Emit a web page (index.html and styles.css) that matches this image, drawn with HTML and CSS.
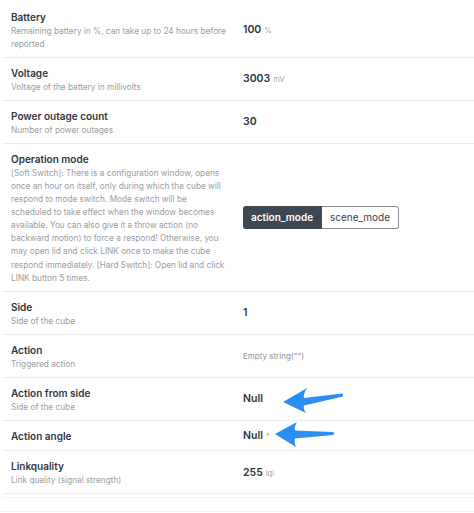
FILE: index.html
```html
<!DOCTYPE html>
<html>
<head>
<meta charset="utf-8">
<link rel="stylesheet" href="styles.css">
</head>
<body>
<div class="page">
  <div class="table">
    <div class="row">
      <div class="label"><div class="title">Battery</div><div class="desc">Remaining battery in %, can take up to 24 hours before reported</div></div>
      <div class="value"><span class="num">100</span> <span class="unit">%</span></div>
    </div>
    <div class="row">
      <div class="label"><div class="title">Voltage</div><div class="desc">Voltage of the battery in millivolts</div></div>
      <div class="value"><span class="num">3003</span> <span class="unit">mV</span></div>
    </div>
    <div class="row">
      <div class="label"><div class="title">Power outage count</div><div class="desc">Number of power outages</div></div>
      <div class="value"><span class="num">30</span></div>
    </div>
    <div class="row">
      <div class="label"><div class="title">Operation mode</div><div class="desc">[Soft Switch]: There is a configuration window, opens once an hour on itself, only during which the cube will respond to mode switch. Mode switch will be scheduled to take effect when the window becomes available. You can also give it a throw action (no backward motion) to force a respond! Otherwise, you may open lid and click LINK once to make the cube respond immediately. [Hard Switch]: Open lid and click LINK button 5 times.</div></div>
      <div class="value"><div class="btn-group"><button class="btn active">action_mode</button><button class="btn">scene_mode</button></div></div>
    </div>
    <div class="row">
      <div class="label"><div class="title">Side</div><div class="desc">Side of the cube</div></div>
      <div class="value"><span class="num">1</span></div>
    </div>
    <div class="row">
      <div class="label"><div class="title">Action</div><div class="desc">Triggered action</div></div>
      <div class="value"><span class="muted">Empty string("")</span></div>
    </div>
    <div class="row">
      <div class="label"><div class="title">Action from side</div><div class="desc">Side of the cube</div></div>
      <div class="value"><span class="num">Null</span></div>
    </div>
    <div class="row">
      <div class="label"><div class="title">Action angle</div></div>
      <div class="value"><span class="num">Null</span> <span class="unit">°</span></div>
    </div>
    <div class="row">
      <div class="label"><div class="title">Linkquality</div><div class="desc">Link quality (signal strength)</div></div>
      <div class="value"><span class="num">255</span> <span class="unit">lqi</span></div>
    </div>
  </div>
  <div class="footer-gap"></div>
  <div class="next-card"></div>
</div>
<svg class="arrows" width="474" height="513" viewBox="0 0 474 513" xmlns="http://www.w3.org/2000/svg">
  <path d="M283,402 L307,388 Q303,394 304,398 L342,393.5 Q344.5,395 342,396.8 L304,405.5 Q303,409 306,413 Z" fill="#2b8ef0"/>
  <path d="M275,434 L297,422 Q294,427 295,430.5 L333,432 Q335.5,433.5 333,435 L295,438.5 Q294,442 296,447 Z" fill="#2b8ef0"/>
</svg>
</body>
</html>
```
FILE: styles.css
```css
html, body {
  margin: 0;
  padding: 0;
  background: #ffffff;
}
body {
  font-family: Inter, "Noto Sans", "Liberation Sans", sans-serif;
  color: #333a40;
  width: 474px;
  height: 513px;
  overflow: hidden;
  position: relative;
}
.page {
  padding-left: 3px;
  padding-top: 1.5px;
}
.table {
  border-bottom: 1px solid #ececec;
}
.row {
  display: grid;
  grid-template-columns: 232px 1fr;
  border-top: 1px solid #ececec;
}
.row:first-child {
  border-top: none;
}
.label {
  padding: 7px 9px 6px 8px;
}
.title {
  font-size: 10px;
  font-weight: 600;
  line-height: 16px;
  color: #30363c;
}
.desc {
  font-size: 8.25px;
  line-height: 13.1px;
  color: #9a9ea3;
}
.value {
  align-self: center;
  padding: 0 8px;
  display: flex;
  align-items: baseline;
  gap: 3px;
}
.num {
  font-size: 10.5px;
  font-weight: 600;
  color: #30363c;
}
.unit {
  font-size: 7.5px;
  color: #a0a4a8;
}
.muted {
  font-size: 8px;
  color: #8e9398;
}
.btn-group {
  display: flex;
  height: 23px;
}
.btn {
  font-family: Inter, "Noto Sans", "Liberation Sans", sans-serif;
  font-size: 10px;
  height: 23px;
  margin: 0;
  padding: 0;
  border: 1px solid #8a8f94;
  background: #ffffff;
  color: #3a4046;
  width: 77px;
  border-radius: 0 3px 3px 0;
  border-left: none;
}
.btn.active {
  width: 79px;
  background: #3e4852;
  border-color: #3e4852;
  color: #ffffff;
  font-weight: 600;
  border-radius: 3px 0 0 3px;
}
.footer-gap {
  height: 3px;
  border-bottom: 1px solid #f0f0f0;
}
.next-card {
  height: 13px;
  margin-left: -3px;
  border-bottom: 1px solid #f0f0f0;
}
.arrows {
  position: absolute;
  left: 0;
  top: 0;
  pointer-events: none;
}
```
